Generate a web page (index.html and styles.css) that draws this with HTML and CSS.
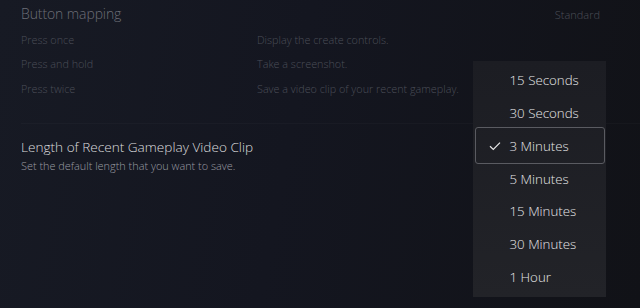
FILE: index.html
```html
<!DOCTYPE html>
<html>
<head>
<meta charset="utf-8">
<link rel="stylesheet" href="styles.css">
</head>
<body>
<div class="screen">
  <section class="mapping">
    <div class="mapping-head">
      <span class="mapping-title">Button mapping</span>
      <span class="mapping-value">Standard</span>
    </div>
    <div class="mapping-rows">
      <span>Press once</span><span>Display the create controls.</span>
      <span>Press and hold</span><span>Take a screenshot.</span>
      <span>Press twice</span><span>Save a video clip of your recent gameplay.</span>
    </div>
  </section>
  <div class="divider"></div>
  <section class="setting">
    <div class="setting-title">Length of Recent Gameplay Video Clip</div>
    <div class="setting-desc">Set the default length that you want to save.</div>
  </section>

  <ul class="dropdown">
    <li class="opt">15 Seconds</li>
    <li class="opt">30 Seconds</li>
    <li class="opt selected"><svg class="check" viewBox="0 0 12 10" width="12" height="10"><path d="M1 5.2 L4.3 8.4 L11 1.6" fill="none" stroke="#e8e8e8" stroke-width="1.2"/></svg>3 Minutes</li>
    <li class="opt">5 Minutes</li>
    <li class="opt">15 Minutes</li>
    <li class="opt">30 Minutes</li>
    <li class="opt">1 Hour</li>
  </ul>
</div>
</body>
</html>
```
FILE: styles.css
```css
html, body {
  margin: 0;
  padding: 0;
}
body {
  width: 640px;
  height: 308px;
  overflow: hidden;
  background: linear-gradient(100deg, #171a24 0%, #141620 45%, #111217 100%);
  font-family: "Open Sans", "Liberation Sans", sans-serif;
  font-weight: 300;
}
.screen {
  position: relative;
  width: 640px;
  height: 308px;
  padding: 4px 0 0 21px;
  box-sizing: border-box;
}
.mapping-head {
  display: flex;
  justify-content: space-between;
  align-items: baseline;
  padding-right: 40px;
  height: 20px;
}
.mapping-title {
  font-size: 14px;
  color: #6c6e77;
  letter-spacing: -0.1px;
}
.mapping-value {
  font-size: 11px;
  color: #4c4f58;
}
.mapping-rows {
  display: grid;
  grid-template-columns: 236px 1fr;
  grid-auto-rows: 24.5px;
  align-items: center;
  margin-top: 3px;
  font-size: 10.8px;
  color: #4b4e58;
}
.divider {
  height: 1px;
  background: rgba(255, 255, 255, 0.025);
  margin-top: 22px;
}
.setting {
  padding-top: 14px;
}
.setting-title {
  font-size: 13.6px;
  color: #dcdcde;
  line-height: 18px;
}
.setting-desc {
  font-size: 10.9px;
  color: #9a9ba2;
  margin-top: 3px;
  line-height: 14px;
}
.dropdown {
  position: absolute;
  left: 473px;
  top: 61px;
  width: 133px;
  height: 236px;
  margin: 0;
  padding: 3px 0 0 0;
  box-sizing: border-box;
  list-style: none;
  background: linear-gradient(180deg, #1c1d23 0%, #222328 100%);
  display: flex;
  flex-direction: column;
  align-items: center;
}
.opt {
  position: relative;
  width: 130px;
  height: 32.7px;
  box-sizing: border-box;
  display: flex;
  align-items: center;
  padding-left: 35px;
  font-size: 13.3px;
  color: #e6e6e8;
}
.opt.selected {
  height: 37px;
  margin: -2px 0;
  border: 1px solid #5a5b61;
  border-radius: 3px;
  padding-left: 34px;
}
.check {
  position: absolute;
  left: 13px;
  top: 13px;
}
```
